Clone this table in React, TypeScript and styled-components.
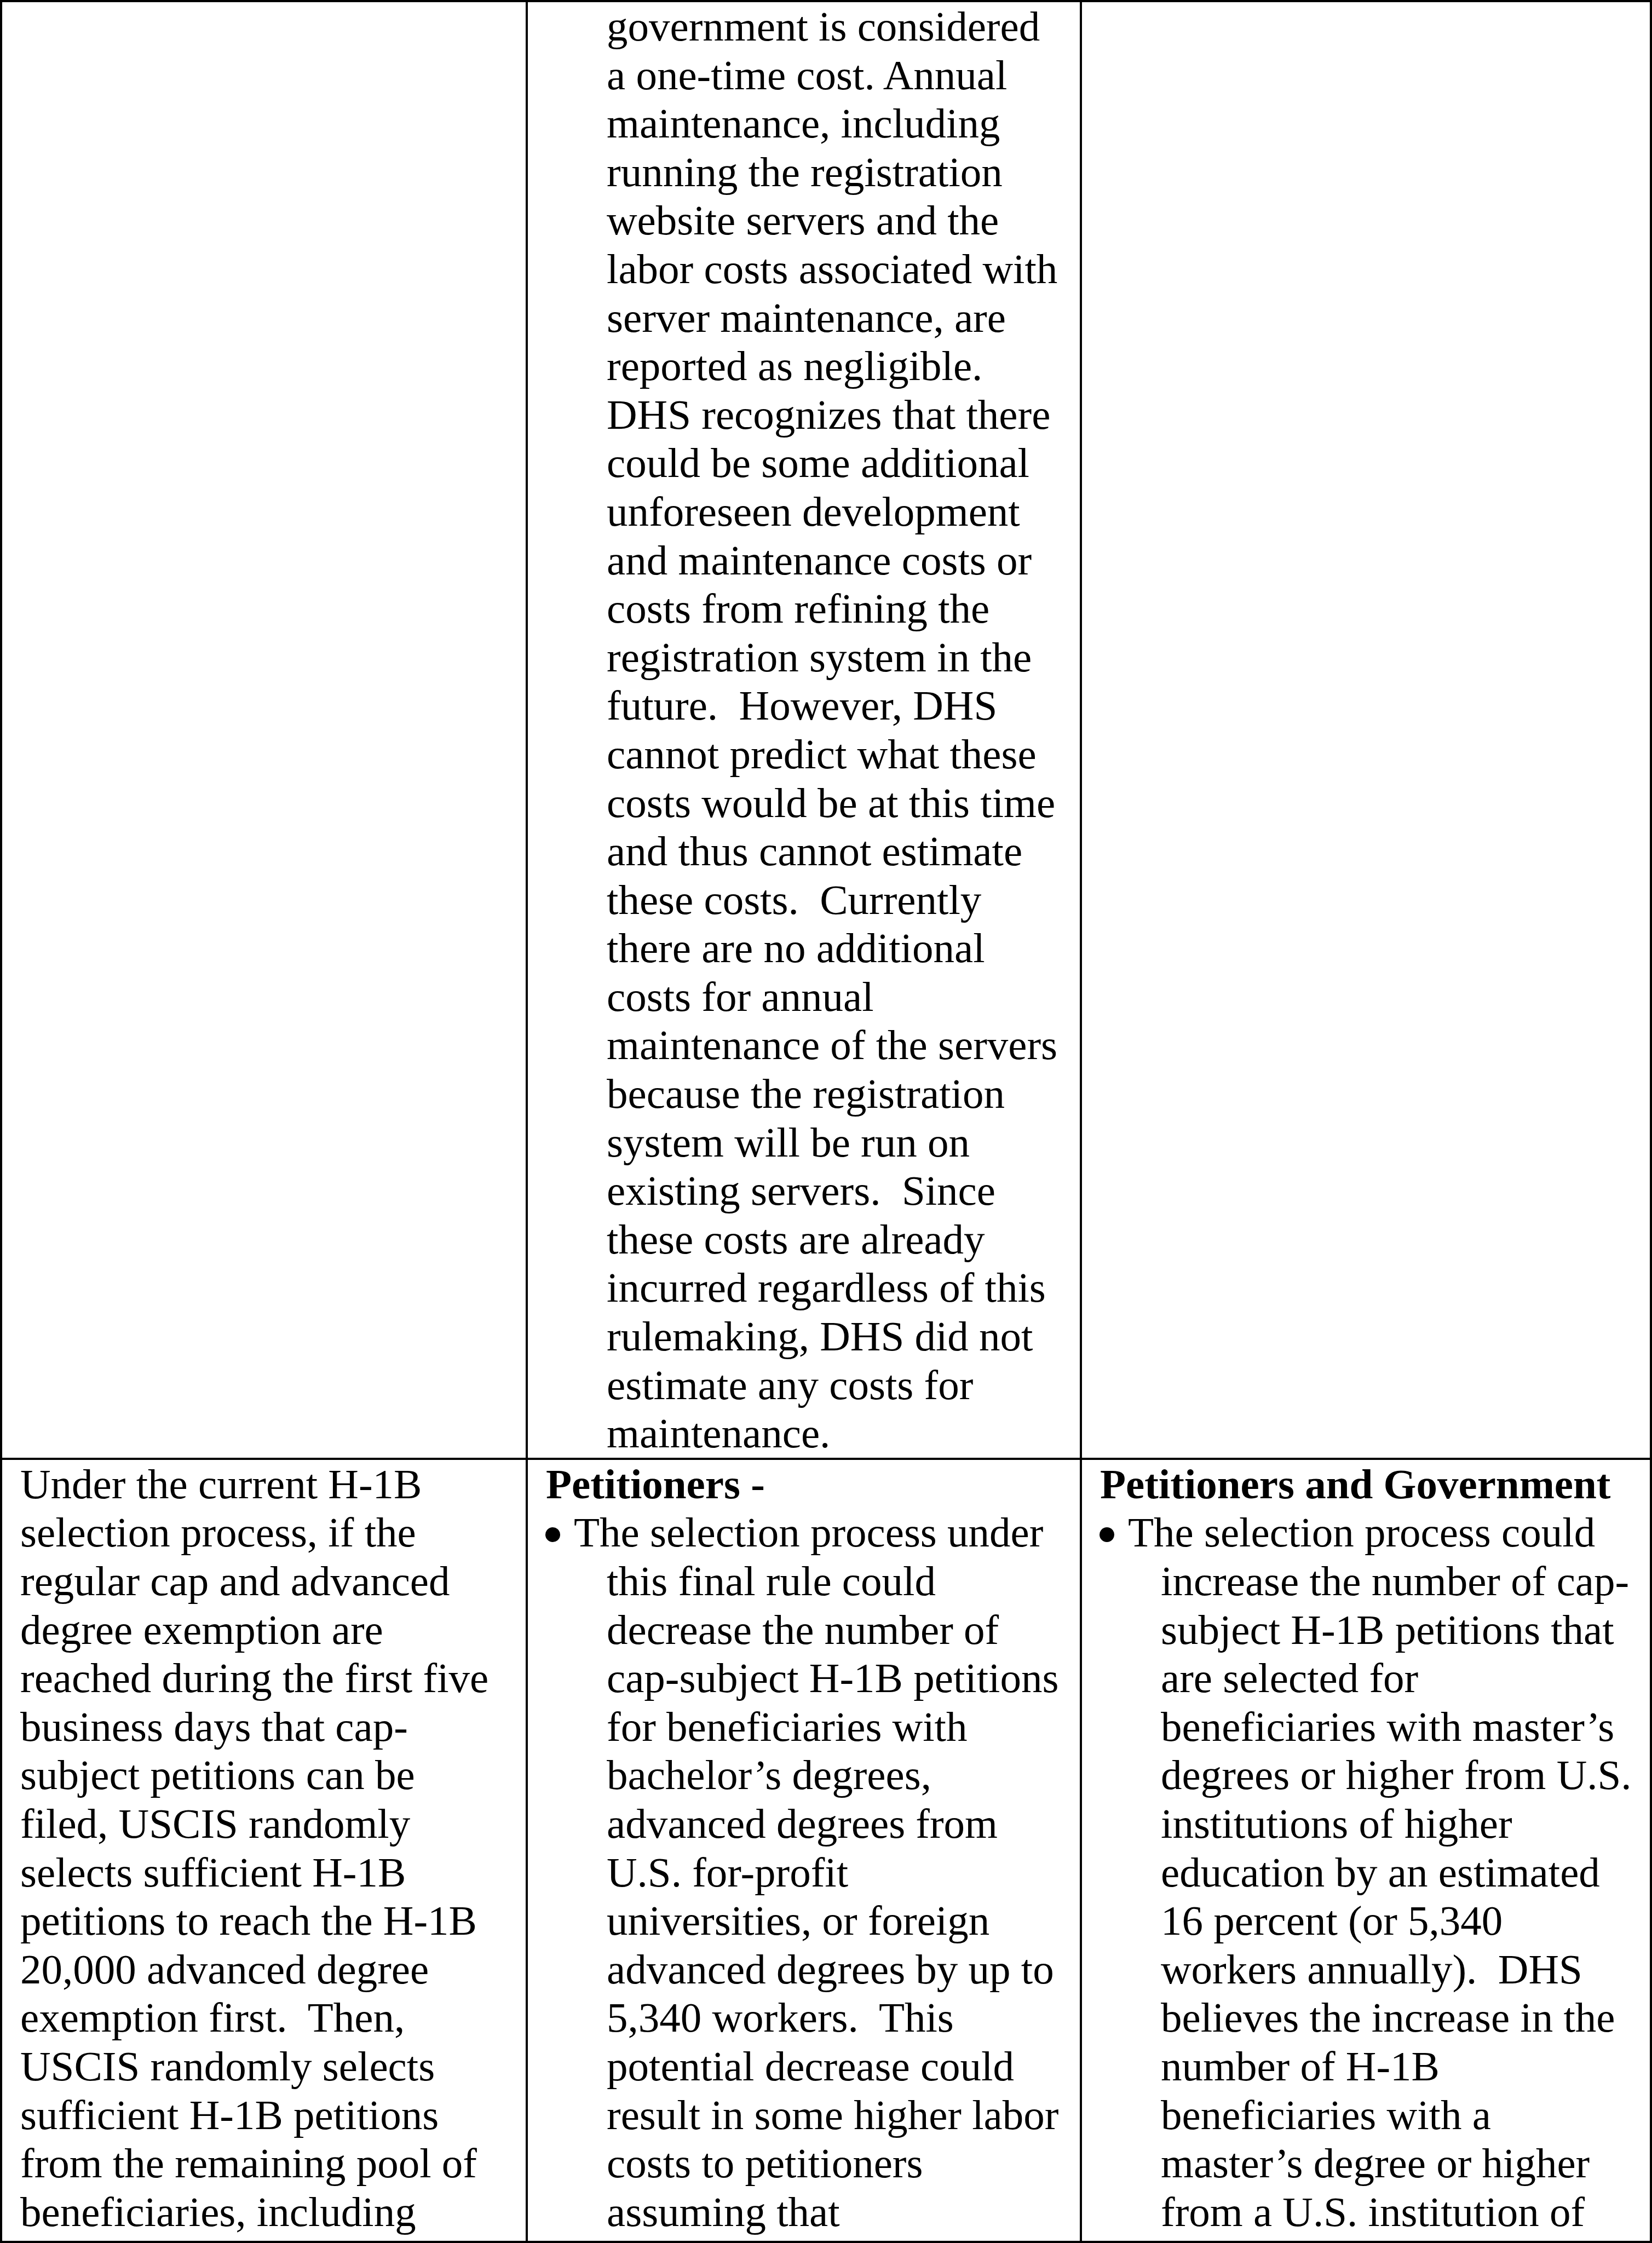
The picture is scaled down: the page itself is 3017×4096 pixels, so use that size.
import styled, {createGlobalStyle} from 'styled-components';

const GlobalStyle = createGlobalStyle`
  html, body {
    margin: 0;
    padding: 0;
    background: #FFFFFF;
  }
`;

const rowOneMiddle = [
    'government is considered',
    'a one-time cost. Annual',
    'maintenance, including',
    'running the registration',
    'website servers and the',
    'labor costs associated with',
    'server maintenance, are',
    'reported as negligible.',
    'DHS recognizes that there',
    'could be some additional',
    'unforeseen development',
    'and maintenance costs or',
    'costs from refining the',
    'registration system in the',
    'future.  However, DHS',
    'cannot predict what these',
    'costs would be at this time',
    'and thus cannot estimate',
    'these costs.  Currently',
    'there are no additional',
    'costs for annual',
    'maintenance of the servers',
    'because the registration',
    'system will be run on',
    'existing servers.  Since',
    'these costs are already',
    'incurred regardless of this',
    'rulemaking, DHS did not',
    'estimate any costs for',
    'maintenance.',
];

const rowTwoLeft = [
    'Under the current H-1B',
    'selection process, if the',
    'regular cap and advanced',
    'degree exemption are',
    'reached during the first five',
    'business days that cap-',
    'subject petitions can be',
    'filed, USCIS randomly',
    'selects sufficient H-1B',
    'petitions to reach the H-1B',
    '20,000 advanced degree',
    'exemption first.  Then,',
    'USCIS randomly selects',
    'sufficient H-1B petitions',
    'from the remaining pool of',
    'beneficiaries, including',
];

const rowTwoMiddle = [
    'The selection process under',
    'this final rule could',
    'decrease the number of',
    'cap-subject H-1B petitions',
    'for beneficiaries with',
    'bachelor\u2019s degrees,',
    'advanced degrees from',
    'U.S. for-profit',
    'universities, or foreign',
    'advanced degrees by up to',
    '5,340 workers.  This',
    'potential decrease could',
    'result in some higher labor',
    'costs to petitioners',
    'assuming that',
];

const rowTwoRight = [
    'The selection process could',
    'increase the number of cap-',
    'subject H-1B petitions that',
    'are selected for',
    'beneficiaries with master\u2019s',
    'degrees or higher from U.S.',
    'institutions of higher',
    'education by an estimated',
    '16 percent (or 5,340',
    'workers annually).  DHS',
    'believes the increase in the',
    'number of H-1B',
    'beneficiaries with a',
    'master\u2019s degree or higher',
    'from a U.S. institution of',
];

type BulletItemProps = {
    lines: string[]
    bullet?: boolean
}

function BulletItem({lines, bullet}: BulletItemProps) {
    return (
        <Item>
            {lines.map((line, i) => (
                <Line key={i}>
                    {bullet && i === 0 && <Bullet/>}
                    {line}
                </Line>
            ))}
        </Item>
    );
}

function App() {
    return (
        <>
            <GlobalStyle/>
            <Page>
                <Row>
                    <Cell/>
                    <Cell divided>
                        <BulletItem lines={rowOneMiddle}/>
                    </Cell>
                    <Cell divided/>
                </Row>
                <Row ruled>
                    <Cell>
                        {rowTwoLeft.map((line, i) => <Line key={i}>{line}</Line>)}
                    </Cell>
                    <Cell divided>
                        <Heading>Petitioners -</Heading>
                        <BulletItem lines={rowTwoMiddle} bullet/>
                    </Cell>
                    <Cell divided>
                        <Heading>Petitioners and Government</Heading>
                        <BulletItem lines={rowTwoRight} bullet/>
                    </Cell>
                </Row>
            </Page>
        </>
    );
}

export default App;


const Page = styled.div`
  box-sizing: border-box;
  display: flex;
  flex-direction: column;
  width: 3017px;
  height: 4096px;
  border: 4px solid #000000;
  overflow: hidden;
  background-color: #FFFFFF;
  color: #000000;
  font-family: "Liberation Serif", "Times New Roman", serif;
  font-size: 77px;
  line-height: 88.6px;
`;

type RowType = {
    ruled?: boolean
}

const Row = styled.div<RowType>`
  display: grid;
  grid-template-columns: 956px 1012px 1041px;
  flex: ${props => props.ruled ? '1 0 auto' : '0 0 auto'};
  border-top: ${props => props.ruled ? '4px solid #000000' : 'none'};
`;

type CellType = {
    divided?: boolean
}

const Cell = styled.div<CellType>`
  box-sizing: border-box;
  padding-left: 33px;
  border-left: ${props => props.divided ? '4px solid #000000' : 'none'};
`;

const Line = styled.div`
  white-space: pre;
`;

const Heading = styled.div`
  font-weight: 700;
  white-space: pre;
`;

const Item = styled.div`
  padding-left: 111px;
`;

const Bullet = styled.span`
  display: inline-block;
  width: 27px;
  height: 27px;
  border-radius: 50%;
  background-color: #000000;
  margin-left: -112px;
  margin-right: 25px;
  vertical-align: 8px;
`;
